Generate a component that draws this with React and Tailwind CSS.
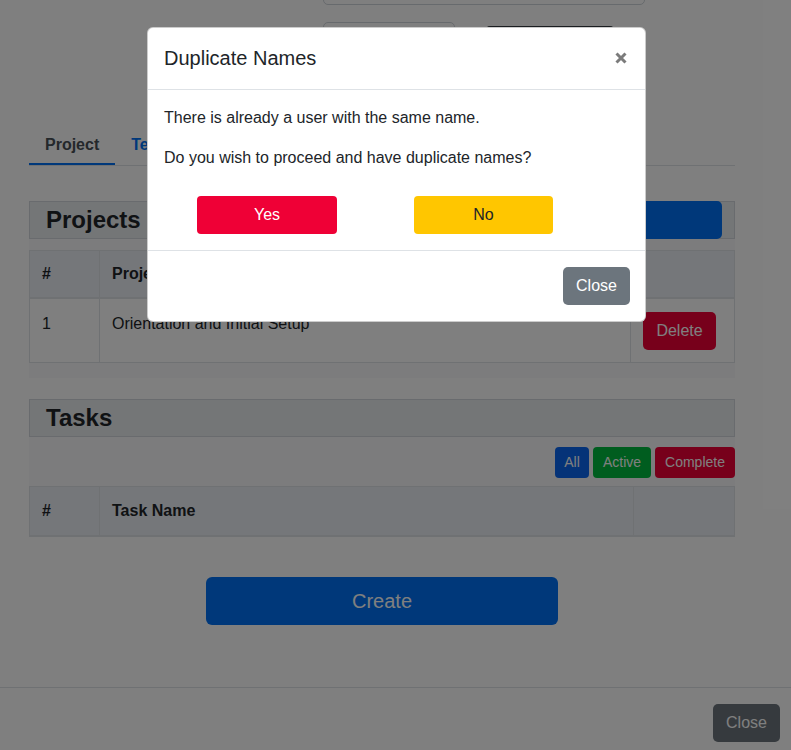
import React from "react";

const BLUE = "bg-[#0071f5]";

function SectionHeader({ title, action }) {
  return (
    <div className="flex h-[38px] items-center border border-[#d3d7dc] bg-[#e9ecef]">
      <h3 className="flex-1 pl-4 text-[24px] font-bold leading-[30px] text-[#212529]">{title}</h3>
      {action}
    </div>
  );
}

function HeadCell({ children, className = "py-3" }) {
  return (
    <th
      className={`border border-b-2 border-[#dee2e6] bg-[#ebeef5] px-3 text-left text-[16px] font-bold leading-[24px] text-[#212529] ${className}`}
    >
      {children}
    </th>
  );
}

export default function App() {
  return (
    <div className="relative h-[750px] w-[791px] overflow-hidden bg-white font-['Liberation_Sans',Arial,sans-serif] text-[#212529]">
      {/* underlying form page */}
      <div className="flex h-full flex-col">
        <div className="flex-1 pl-[29px]">
          <div className="w-[706px]">
            {/* form inputs at the top */}
            <div className="-mt-[33px] pl-[294px]">
              <div className="h-[38px] w-[322px] rounded-[5px] border border-[#ced4da] bg-white" />
              <div className="mt-[17px] flex items-start">
                <div className="h-[38px] w-[132px] rounded-[5px] border border-[#ced4da] bg-white" />
                <div className="ml-[30px] mt-[4px] h-[38px] w-[130px] rounded-[5px] bg-[#343a40]" />
              </div>
            </div>

            {/* tabs */}
            <div className="mt-[59px] flex border-b border-[#dee2e6]">
              <div className="border-b-2 border-[#0071f5] px-4 pb-[6px] pt-[10px] text-[16px] font-bold leading-[24px] text-[#495057]">
                Project
              </div>
              <div className="px-4 pb-[6px] pt-[10px] text-[16px] font-bold leading-[24px] text-[#0071f5]">Team</div>
            </div>

            {/* projects */}
            <div className="mt-[35px] bg-[#f8f9fa] pb-[15px]">
              <SectionHeader
                title="Projects"
                action={
                  <button className={`-my-px mr-[12px] h-[38px] w-[260px] rounded-[5px] ${BLUE} text-[16px] text-white`}>
                    Add Project
                  </button>
                }
              />
              <table className="mt-[11px] w-full table-fixed border-collapse">
                <colgroup>
                  <col className="w-[70px]" />
                  <col />
                  <col className="w-[104px]" />
                </colgroup>
                <thead>
                  <tr>
                    <HeadCell className="py-[11px]">#</HeadCell>
                    <HeadCell className="py-[11px]">Project Name</HeadCell>
                    <HeadCell className="py-[11px]" />
                  </tr>
                </thead>
                <tbody>
                  <tr className="bg-white">
                    <td className="border border-[#dee2e6] px-3 pb-3 pt-[13px] align-top text-[16px] leading-[24px]">1</td>
                    <td className="border border-[#dee2e6] px-3 pb-3 pt-[13px] align-top text-[16px] leading-[24px]">
                      Orientation and Initial Setup
                    </td>
                    <td className="border border-[#dee2e6] px-3 pb-3 pt-[13px] align-top">
                      <button className="h-[38px] w-[73px] rounded-[5px] bg-[#ef0036] text-[16px] text-white">Delete</button>
                    </td>
                  </tr>
                </tbody>
              </table>
            </div>

            {/* tasks */}
            <div className="mt-[21px]">
              <SectionHeader title="Tasks" />
              <div className="flex justify-end gap-1 bg-[#f8f9fa] pb-[8px] pt-[10px]">
                <button className="h-[31px] w-[34px] rounded-[4px] bg-[#0a66f0] text-[14px] text-white">All</button>
                <button className="h-[31px] w-[58px] rounded-[4px] bg-[#00bb3f] text-[14px] text-white">Active</button>
                <button className="h-[31px] w-[80px] rounded-[4px] bg-[#ef0036] text-[14px] text-white">Complete</button>
              </div>
              <table className="w-full table-fixed border-collapse">
                <colgroup>
                  <col className="w-[70px]" />
                  <col />
                  <col className="w-[101px]" />
                </colgroup>
                <thead>
                  <tr>
                    <HeadCell>#</HeadCell>
                    <HeadCell>Task Name</HeadCell>
                    <HeadCell />
                  </tr>
                </thead>
              </table>
            </div>

            <div className="mt-[40px] flex justify-center">
              <button className={`h-[48px] w-[352px] rounded-[6px] ${BLUE} text-[20px] text-white`}>Create</button>
            </div>
          </div>
        </div>

        <div className="flex h-[63px] shrink-0 justify-end border-t border-[#dee2e6] pr-[11px] pt-4">
          <button className="h-[38px] w-[67px] rounded-[5px] bg-[#6c757d] text-[16px] text-white">Close</button>
        </div>
      </div>

      {/* modal backdrop */}
      <div className="absolute inset-0 bg-black/50" />

      {/* confirmation dialog */}
      <div className="absolute left-[147px] top-[27px] w-[499px] rounded-[6px] border border-black/20 bg-white">
        <div className="flex items-center justify-between border-b border-[#dee2e6] px-4 pb-4 pt-[15px]">
          <h5 className="text-[20px] leading-[30px] text-[#212529]">Duplicate Names</h5>
          <svg width="12" height="12" viewBox="0 0 12 12" className="mr-[2px]">
            <path d="M1.5 1.5 L10.5 10.5 M10.5 1.5 L1.5 10.5" stroke="#7b7b7b" strokeWidth="3" strokeLinecap="butt" />
          </svg>
        </div>
        <div className="border-b border-[#dee2e6] p-4 text-[16px] leading-[24px]">
          <p className="mb-4">There is already a user with the same name.</p>
          <p className="mb-[26px]">Do you wish to proceed and have duplicate names?</p>
          <div className="flex">
            <button className="ml-[33px] h-[38px] w-[140px] rounded-[4px] bg-[#ef0036] text-[16px] text-white">Yes</button>
            <button className="ml-[77px] h-[38px] w-[139px] rounded-[4px] bg-[#ffc600] text-[16px] text-[#212529]">
              No
            </button>
          </div>
        </div>
        <div className="flex justify-end px-[15px] py-4">
          <button className="h-[38px] w-[67px] rounded-[5px] bg-[#6c757d] text-[16px] text-white">Close</button>
        </div>
      </div>
    </div>
  );
}
